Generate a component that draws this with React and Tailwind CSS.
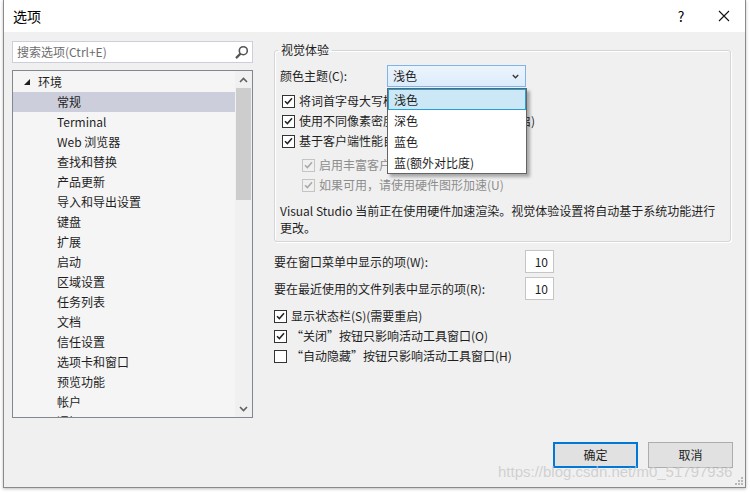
import React from 'react';

const TREE = ['常规', 'Terminal', 'Web 浏览器', '查找和替换', '产品更新', '导入和导出设置', '键盘', '扩展', '启动', '区域设置', '任务列表', '文档', '信任设置', '选项卡和窗口', '预览功能', '帐户', '通知'];
const THEMES = ['浅色', '深色', '蓝色', '蓝(额外对比度)'];

function Check({ checked, disabled }) {
  return (
    <span className={`w-[13px] h-[13px] shrink-0 border flex items-center justify-center ${disabled ? 'border-[#c4c4c4] bg-[#f0f0f0]' : 'border-[#333] bg-white'}`}>
      {checked && (
        <svg width="9" height="8" viewBox="0 0 9 8">
          <path d="M1 4.2 L3.4 6.6 L8 1.2" fill="none" stroke={disabled ? '#a8a8a8' : '#222'} strokeWidth="1.5" />
        </svg>
      )}
    </span>
  );
}

function CheckRow({ checked, disabled, children, className = '' }) {
  return (
    <div className={`flex items-center h-[20px] gap-[4px] ${className}`}>
      <Check checked={checked} disabled={disabled} />
      <span className={`whitespace-nowrap ${disabled ? 'text-[#8d8d8d]' : ''}`}>{children}</span>
    </div>
  );
}

function Chevron({ up }) {
  return (
    <svg width="9" height="6" viewBox="0 0 9 6">
      <path d={up ? 'M1 5 L4.5 1.5 L8 5' : 'M1 1 L4.5 4.5 L8 1'} fill="none" stroke="#606060" strokeWidth="1.6" />
    </svg>
  );
}

export default function App() {
  return (
    <div className="w-[750px] h-[493px] bg-white overflow-hidden relative font-['Noto_Sans_CJK_SC','Noto_Sans',sans-serif] text-[12px] text-[#1e1e1e] leading-[20px]">
      <div className="ml-[3px] w-[743px] h-[488px] border-l border-r border-b border-[#8a8a8a] bg-[#f0f0f0] flex flex-col relative shadow-[0_1px_3px_rgba(0,0,0,0.25)]">
        {/* Title bar */}
        <div className="h-[32px] bg-white flex items-center shrink-0">
          <span className="ml-[9px] text-[14px] text-black">选项</span>
          <span className="ml-auto text-[14px] text-black w-[20px] text-center">?</span>
          <span className="ml-[26px] mr-[14px] w-[14px] h-[14px] flex items-center justify-center">
            <svg width="12" height="12" viewBox="0 0 12 12">
              <path d="M1 1 L11 11 M11 1 L1 11" stroke="#111" strokeWidth="1.1" />
            </svg>
          </span>
        </div>

        {/* Body */}
        <div className="flex flex-1">
          {/* Left: search + tree */}
          <div className="w-[241px] ml-[8px] pt-[9px] flex flex-col shrink-0">
            <div className="h-[22px] border border-[#cccedb] bg-white flex items-center pl-[4px] pr-[3px]">
              <span className="text-[#6d6d6d] flex-1">搜索选项(Ctrl+E)</span>
              <svg width="15" height="15" viewBox="0 0 15 15">
                <circle cx="9.3" cy="5.7" r="4" fill="none" stroke="#555" strokeWidth="1.6" />
                <path d="M6.5 8.6 L2 13.1" stroke="#555" strokeWidth="2.2" />
              </svg>
            </div>
            <div className="mt-[7px] h-[348px] border border-[#828790] bg-[#f5f5f5] flex overflow-hidden">
              <div className="flex-1 pt-[1px] overflow-hidden">
                <div className="h-[20px] flex items-center">
                  <svg className="ml-[11px]" width="6" height="6" viewBox="0 0 6 6">
                    <path d="M6 0 L6 6 L0 6 Z" fill="#1e1e1e" />
                  </svg>
                  <span className="ml-[8px]">环境</span>
                </div>
                {TREE.map((t, i) => (
                  <div key={t} className={`h-[20px] flex items-center pl-[44px] whitespace-nowrap ${i === 0 ? 'bg-[#cccedb]' : ''}`}>
                    {t}
                  </div>
                ))}
              </div>
              <div className="w-[17px] bg-[#f0f0f0] flex flex-col items-center shrink-0">
                <div className="h-[17px] flex items-center justify-center"><Chevron up /></div>
                <div className="w-[15px] h-[112px] bg-[#cdcdcd]" />
                <div className="flex-1" />
                <div className="h-[17px] flex items-center justify-center"><Chevron /></div>
              </div>
            </div>
          </div>

          {/* Right: settings */}
          <div className="ml-[21px] w-[457px] pt-[11px] flex flex-col">
            <fieldset className="border border-[#d5d5d5] rounded-[3px] px-[3px] pb-[5px] shadow-[inset_1px_1px_0_#fff,1px_1px_0_#fff]">
              <legend className="px-[3px] leading-[14px]">视觉体验</legend>
              <div className="pl-[2px] pt-[8px]">
                <div className="flex items-center h-[22px]">
                  <span className="w-[107px]">颜色主题(C):</span>
                  <div className="relative">
                    <div className="w-[139px] h-[22px] border border-[#7eb4ea] bg-gradient-to-b from-[#ecf4fc] to-[#dcecfc] flex items-center pl-[5px] pr-[6px]">
                      <span className="flex-1">浅色</span>
                      <svg width="7" height="5" viewBox="0 0 7 5">
                        <path d="M0.8 1 L3.5 3.8 L6.2 1" fill="none" stroke="#333" strokeWidth="1.3" />
                      </svg>
                    </div>
                    <div className="absolute top-[23px] left-0 w-[140px] border border-[#646464] bg-white shadow-[3px_3px_3px_rgba(0,0,0,0.3)] z-10">
                      {THEMES.map((t, i) => (
                        <div key={t} className={`h-[21px] flex items-center pl-[5px] whitespace-nowrap border ${i === 0 ? 'bg-[#cce8f6] border-[#26a0da]' : 'border-transparent'}`}>
                          {t}
                        </div>
                      ))}
                    </div>
                  </div>
                </div>
                <div className="mt-[4px] pl-[2px]">
                  <CheckRow checked>将词首字母大写样式应用于菜单栏</CheckRow>
                  <CheckRow checked>使用不同像素密度的屏幕优化呈现(需要重启)</CheckRow>
                  <CheckRow checked>基于客户端性能自动调整视觉体验</CheckRow>
                </div>
                <div className="mt-[4px] pl-[22px]">
                  <CheckRow checked disabled>启用丰富客户端视觉体验</CheckRow>
                  <CheckRow checked disabled>如果可用，请使用硬件图形加速(U)</CheckRow>
                </div>
                <p className="mt-[7px] leading-[17px] pr-[10px]">
                  Visual Studio 当前正在使用硬件加速渲染。视觉体验设置将自动基于系统功能进行更改。
                </p>
              </div>
            </fieldset>

            <div className="mt-[8px] flex flex-col gap-[4px] pr-[177px]">
              <div className="flex items-center justify-between">
                <span>要在窗口菜单中显示的项(W):</span>
                <div className="w-[29px] h-[23px] border border-[#c5c5c5] bg-white text-right pr-[5px] leading-[21px]">10</div>
              </div>
              <div className="flex items-center justify-between">
                <span>要在最近使用的文件列表中显示的项(R):</span>
                <div className="w-[29px] h-[23px] border border-[#c5c5c5] bg-white text-right pr-[5px] leading-[21px]">10</div>
              </div>
            </div>

            <div className="mt-[6px]">
              <CheckRow checked>显示状态栏(S)(需要重启)</CheckRow>
              <CheckRow checked>“关闭”按钮只影响活动工具窗口(O)</CheckRow>
              <CheckRow>“自动隐藏”按钮只影响活动工具窗口(H)</CheckRow>
            </div>
          </div>
        </div>

        {/* Footer */}
        <div className="flex justify-end gap-[10px] pr-[12px] pb-[19px] shrink-0">
          <button className="w-[85px] h-[26px] border-2 border-[#0078d7] bg-[#e1e1e1] text-[12px]">确定</button>
          <button className="w-[85px] h-[26px] border border-[#adadad] bg-[#e1e1e1] text-[12px]">取消</button>
        </div>

        {/* Watermark */}
        <div className="absolute left-[494px] top-[464px] text-[15px] leading-none font-['Liberation_Sans',sans-serif] text-[#c8c8c8]/80 whitespace-nowrap pointer-events-none">
          https://blog.csdn.net/m0_51797936
        </div>
        {/* Resize grip */}
        <div className="absolute right-[2px] bottom-[2px] grid grid-cols-3 gap-[1px]">
          {[0, 0, 1, 0, 1, 1, 1, 1, 1].map((v, i) => (
            <span key={i} className={`w-[2px] h-[2px] ${v ? 'bg-[#b8b8b8]' : ''}`} />
          ))}
        </div>
      </div>
    </div>
  );
}
